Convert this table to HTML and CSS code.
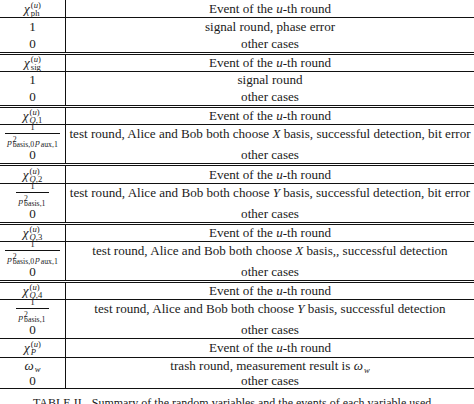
FILE: index.html
```html
<!DOCTYPE html>
<html>
<head>
<meta charset="utf-8">
<link rel="stylesheet" href="styles.css">
</head>
<body>
<div class="tbl">
  <div class="row head h17"><div class="c1"><span class="sym"><i>χ</i><span class="ss"><span>(<i>u</i>)</span><span>ph</span></span></span></div><div class="c2"><span>Event of the <i>u</i>-th round</span></div></div>
  <div class="hr"></div>
  <div class="row v17"><div class="c1">1</div><div class="c2"><span>signal round, phase error</span></div></div>
  <div class="row v17"><div class="c1">0</div><div class="c2"><span>other cases</span></div></div>
  <div class="dbl"></div>

  <div class="row head"><div class="c1"><span class="sym"><i>χ</i><span class="ss"><span>(<i>u</i>)</span><span>sig</span></span></span></div><div class="c2"><span>Event of the <i>u</i>-th round</span></div></div>
  <div class="hr"></div>
  <div class="row v165"><div class="c1">1</div><div class="c2"><span>signal round</span></div></div>
  <div class="row v165"><div class="c1">0</div><div class="c2"><span>other cases</span></div></div>
  <div class="dbl"></div>

  <div class="row head"><div class="c1"><span class="sym"><i>χ</i><span class="ss"><span>(<i>u</i>)</span><span><i>Q</i>,1</span></span></span></div><div class="c2"><span>Event of the <i>u</i>-th round</span></div></div>
  <div class="hr"></div>
  <div class="row fr"><div class="c1"><span class="frac"><span class="num">1</span><span class="den"><i>p</i><span class="ss2"><span>2</span><span>basis,0</span></span><i>p</i><span class="sub2">aux,1</span></span></span></div><div class="c2"><span>test round, Alice and Bob both choose <i>X</i> basis, successful detection, bit error</span></div></div>
  <div class="row v16"><div class="c1">0</div><div class="c2"><span>other cases</span></div></div>
  <div class="dbl"></div>

  <div class="row head h17"><div class="c1"><span class="sym"><i>χ</i><span class="ss"><span>(<i>u</i>)</span><span><i>Q</i>,2</span></span></span></div><div class="c2"><span>Event of the <i>u</i>-th round</span></div></div>
  <div class="hr"></div>
  <div class="row fr"><div class="c1"><span class="frac"><span class="num">1</span><span class="den"><i>p</i><span class="ss2"><span>2</span><span>basis,1</span></span></span></span></div><div class="c2"><span>test round, Alice and Bob both choose <i>Y</i> basis, successful detection, bit error</span></div></div>
  <div class="row v16"><div class="c1">0</div><div class="c2"><span>other cases</span></div></div>
  <div class="dbl"></div>

  <div class="row head"><div class="c1"><span class="sym"><i>χ</i><span class="ss"><span>(<i>u</i>)</span><span><i>Q</i>,3</span></span></span></div><div class="c2"><span>Event of the <i>u</i>-th round</span></div></div>
  <div class="hr"></div>
  <div class="row fr"><div class="c1"><span class="frac"><span class="num">1</span><span class="den"><i>p</i><span class="ss2"><span>2</span><span>basis,0</span></span><i>p</i><span class="sub2">aux,1</span></span></span></div><div class="c2"><span>test round, Alice and Bob both choose <i>X</i> basis,, successful detection</span></div></div>
  <div class="row v16"><div class="c1">0</div><div class="c2"><span>other cases</span></div></div>
  <div class="dbl"></div>

  <div class="row head"><div class="c1"><span class="sym"><i>χ</i><span class="ss"><span>(<i>u</i>)</span><span><i>Q</i>,4</span></span></span></div><div class="c2"><span>Event of the <i>u</i>-th round</span></div></div>
  <div class="hr"></div>
  <div class="row fr"><div class="c1"><span class="frac"><span class="num">1</span><span class="den"><i>p</i><span class="ss2"><span>2</span><span>basis,1</span></span></span></span></div><div class="c2"><span>test round, Alice and Bob both choose <i>Y</i> basis, successful detection</span></div></div>
  <div class="row v16"><div class="c1">0</div><div class="c2"><span>other cases</span></div></div>
  <div class="hr"></div>

  <div class="row head h18"><div class="c1"><span class="sym"><i>χ</i><span class="ss"><span>(<i>u</i>)</span><span><i>P</i></span></span></span></div><div class="c2"><span>Event of the <i>u</i>-th round</span></div></div>
  <div class="hr"></div>
  <div class="row v15"><div class="c1"><span class="sym"><i>ω</i><span class="sub1"><i>w</i></span></span></div><div class="c2"><span>trash round, measurement result is <i>ω</i><span class="sub1"><i>w</i></span></span></div></div>
  <div class="row v15"><div class="c1">0</div><div class="c2"><span>other cases</span></div></div>
  <div class="hr"></div>
</div>
<p class="caption"><span class="sc">TABLE II.</span> Summary of the random variables and the events of each variable used</p>
</body>
</html>
```

FILE: styles.css
```css
html, body {
  margin: 0;
  padding: 0;
  background: #fff;
}
body {
  font-family: "Liberation Serif", "DejaVu Serif", serif;
  font-size: 13.1px;
  color: #1a1a1a;
  overflow: hidden;
}
.tbl {
  width: 474px;
}
.row {
  display: grid;
  grid-template-columns: 66px 1fr;
}
.c1 {
  border-right: 1px solid #111;
  display: flex;
  align-items: center;
  justify-content: center;
}
.c2 {
  display: flex;
  align-items: center;
  justify-content: center;
  white-space: nowrap;
  min-width: 0;
}
.head { height: 16px; }
.h17 { height: 17px; }
.h18 { height: 18px; }
.v17 { height: 17px; }
.v165 { height: 16.5px; }
.v16 { height: 16px; }
.v15 { height: 15px; }
.fr { height: 22px; }
.fr .c2 {
  padding-bottom: 5px;
}
.hr {
  border-top: 1px solid #111;
}
.dbl {
  height: 1px;
  border-top: 1px solid #111;
  border-bottom: 1px solid #111;
}
.sym {
  display: inline-flex;
  align-items: center;
  line-height: 14px;
}
.ss {
  display: inline-flex;
  flex-direction: column;
  font-size: 8.6px;
  line-height: 8px;
  margin-left: 1px;
}
.sub1 {
  font-size: 8.6px;
  position: relative;
  top: 3px;
  margin-left: 1px;
}
.frac {
  display: inline-flex;
  flex-direction: column;
  align-items: center;
  font-size: 9.2px;
  line-height: 8px;
  margin-top: -2px;
}
.num {
  padding-bottom: 2px;
}
.den {
  border-top: 1px solid #111;
  padding: 3px 2px 0;
  display: inline-flex;
  align-items: center;
  line-height: 9px;
}
.ss2 {
  display: inline-flex;
  flex-direction: column;
  font-size: 7.8px;
  line-height: 5px;
  margin-left: 1px;
  margin-right: 1px;
}
.sub2 {
  font-size: 7.8px;
  position: relative;
  top: 2px;
  margin-left: 1px;
}
.caption {
  margin: 7px 0 0 33px;
  font-size: 12px;
  line-height: 14px;
  white-space: nowrap;
}
.sc {
  font-variant: small-caps;
  margin-right: 4px;
}
```
